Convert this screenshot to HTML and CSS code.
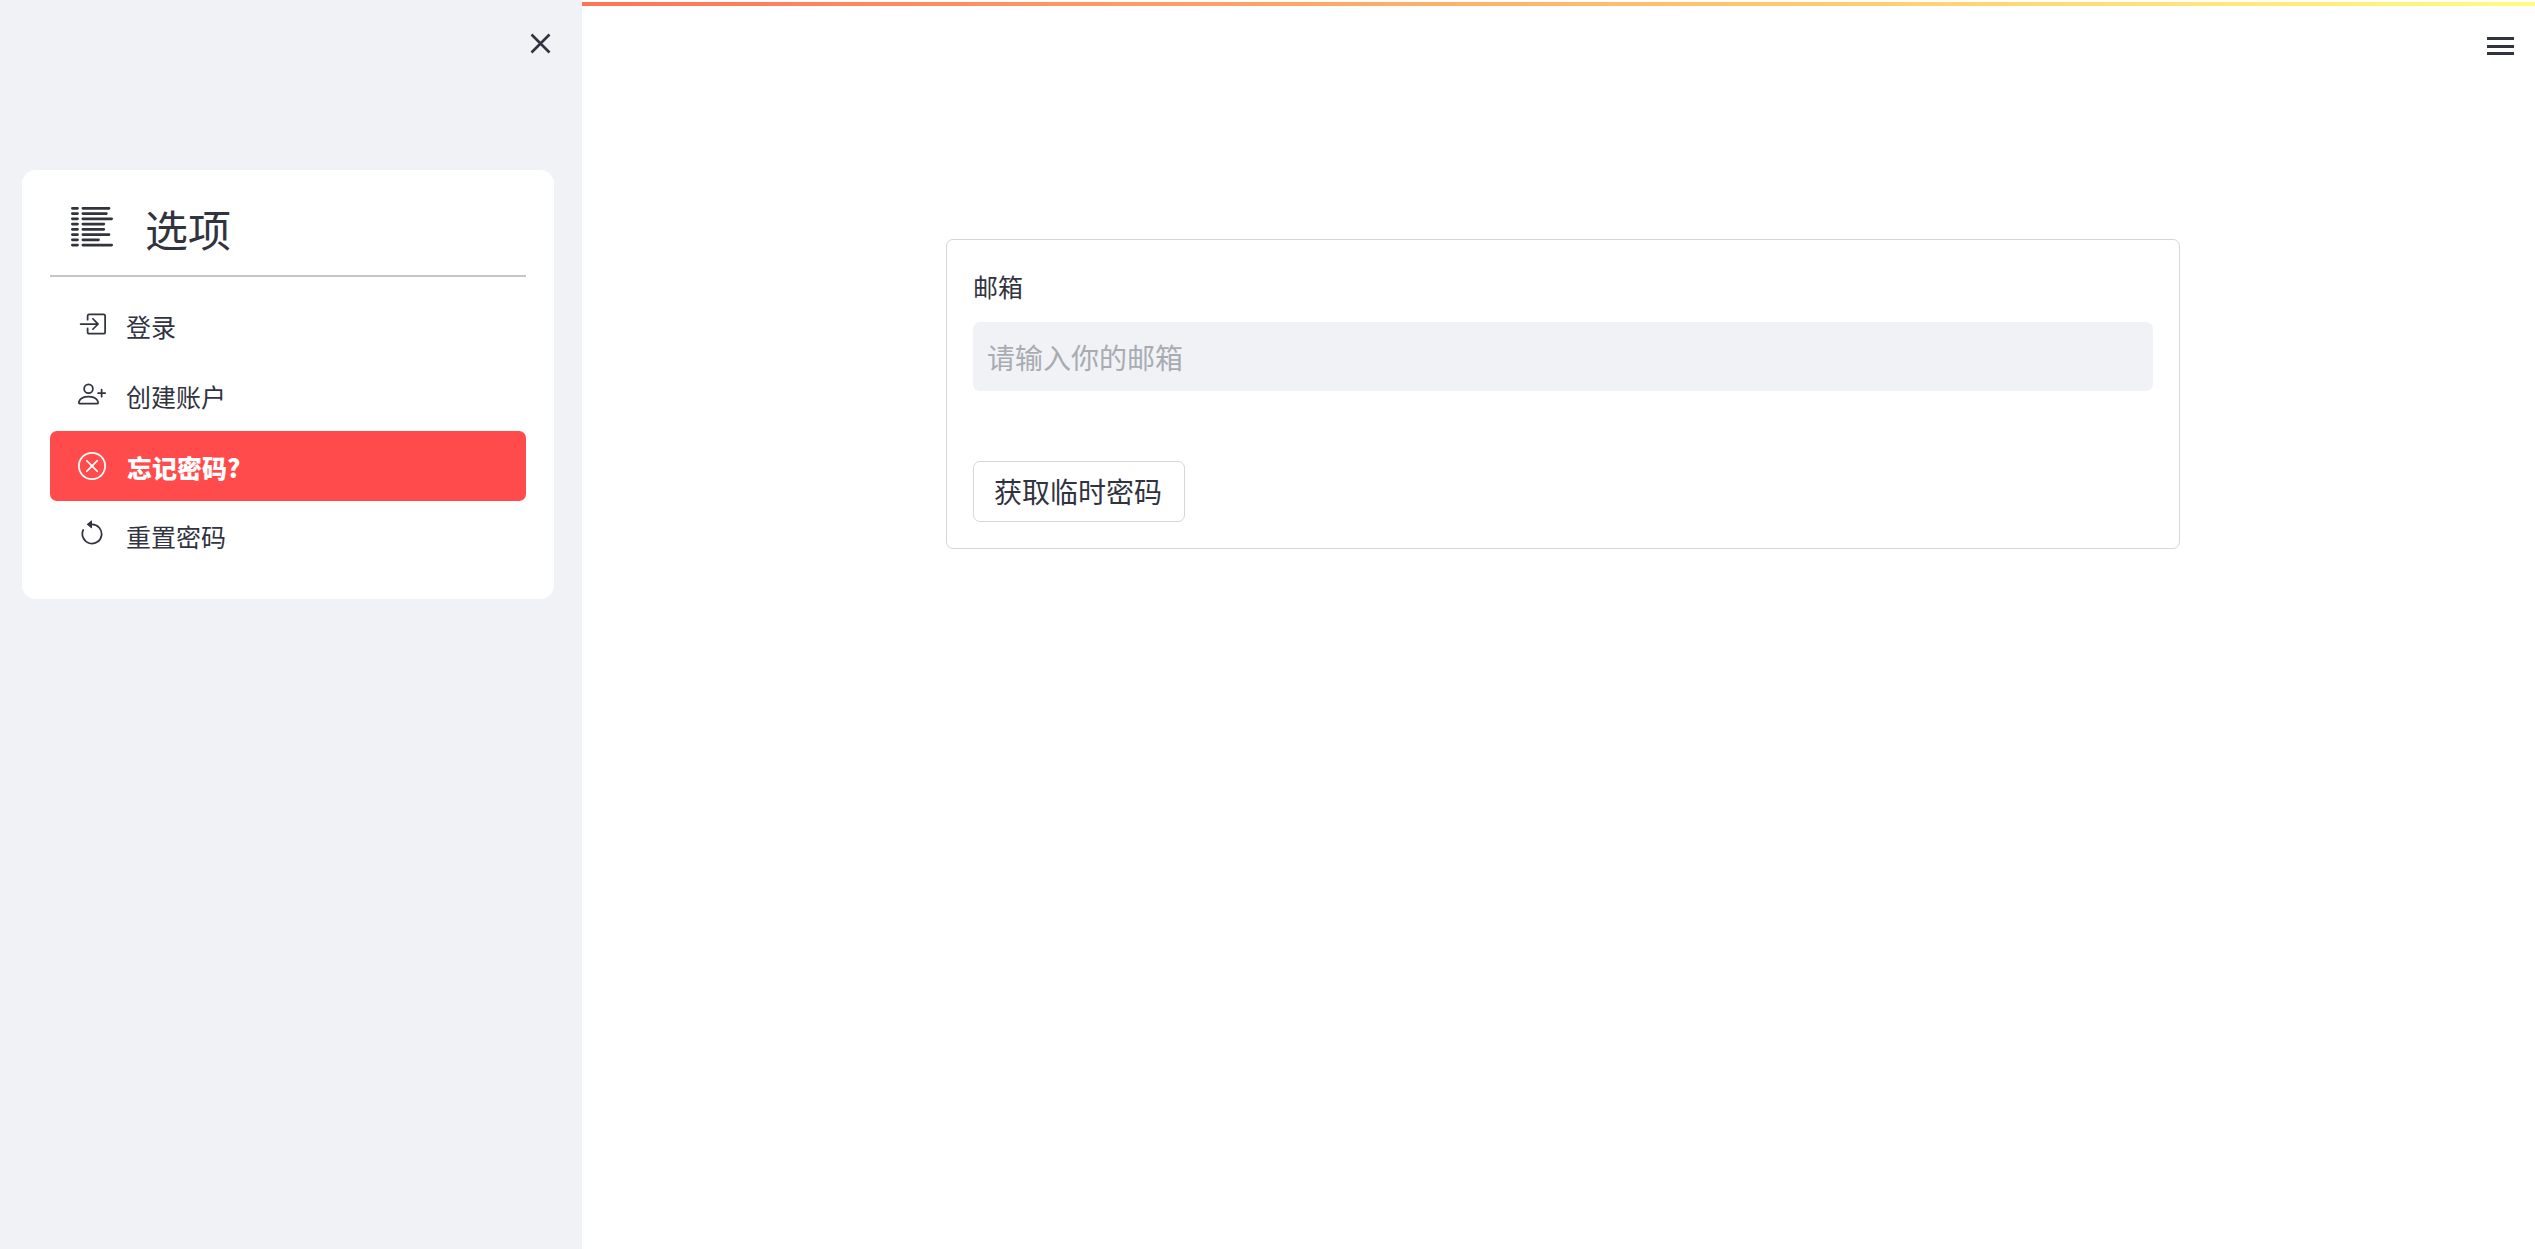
FILE: index.html
```html
<!DOCTYPE html>
<html lang="zh-CN">
<head>
<meta charset="utf-8">
<title>忘记密码</title>
<link rel="stylesheet" href="styles.css">
</head>
<body>
<div class="app">
  <aside class="sidebar">
    <div class="sidebar-head">
      <button class="icon-btn" aria-label="关闭">
        <svg class="close-icon" viewBox="0 0 21 21"><path d="M1.5 1.5l18 18M19.5 1.5l-18 18"/></svg>
      </button>
    </div>
    <nav class="menu">
      <div class="menu-title">
        <svg class="title-icon" viewBox="0 0 16 16"><path d="M0 .5A.5.5 0 0 1 .5 0h2a.5.5 0 0 1 0 1h-2A.5.5 0 0 1 0 .5Zm4 0a.5.5 0 0 1 .5-.5h10a.5.5 0 0 1 0 1h-10A.5.5 0 0 1 4 .5Zm-4 2A.5.5 0 0 1 .5 2h2a.5.5 0 0 1 0 1h-2a.5.5 0 0 1-.5-.5Zm4 0a.5.5 0 0 1 .5-.5h9a.5.5 0 0 1 0 1h-9a.5.5 0 0 1-.5-.5Zm-4 2A.5.5 0 0 1 .5 4h2a.5.5 0 0 1 0 1h-2a.5.5 0 0 1-.5-.5Zm4 0a.5.5 0 0 1 .5-.5h11a.5.5 0 0 1 0 1h-11a.5.5 0 0 1-.5-.5Zm-4 2A.5.5 0 0 1 .5 6h2a.5.5 0 0 1 0 1h-2a.5.5 0 0 1-.5-.5Zm4 0a.5.5 0 0 1 .5-.5h8a.5.5 0 0 1 0 1h-8a.5.5 0 0 1-.5-.5Zm-4 2A.5.5 0 0 1 .5 8h2a.5.5 0 0 1 0 1h-2a.5.5 0 0 1-.5-.5Zm4 0a.5.5 0 0 1 .5-.5h8a.5.5 0 0 1 0 1h-8a.5.5 0 0 1-.5-.5Zm-4 2a.5.5 0 0 1 .5-.5h2a.5.5 0 0 1 0 1h-2a.5.5 0 0 1-.5-.5Zm4 0a.5.5 0 0 1 .5-.5h10a.5.5 0 0 1 0 1h-10a.5.5 0 0 1-.5-.5Zm-4 2a.5.5 0 0 1 .5-.5h2a.5.5 0 0 1 0 1h-2a.5.5 0 0 1-.5-.5Zm4 0a.5.5 0 0 1 .5-.5h6a.5.5 0 0 1 0 1h-6a.5.5 0 0 1-.5-.5Zm-4 2a.5.5 0 0 1 .5-.5h2a.5.5 0 0 1 0 1h-2a.5.5 0 0 1-.5-.5Zm4 0a.5.5 0 0 1 .5-.5h11a.5.5 0 0 1 0 1h-11a.5.5 0 0 1-.5-.5Z"/></svg>
        <span class="title-text">选项</span>
      </div>
      <hr class="menu-rule">
      <ul class="menu-list">
        <li class="menu-item">
          <svg class="item-icon" viewBox="0 0 16 16"><path d="M6 3.5a.5.5 0 0 1 .5-.5h8a.5.5 0 0 1 .5.5v9a.5.5 0 0 1-.5.5h-8a.5.5 0 0 1-.5-.5v-2a.5.5 0 0 0-1 0v2A1.5 1.5 0 0 0 6.5 14h8a1.5 1.5 0 0 0 1.5-1.5v-9A1.5 1.5 0 0 0 14.5 2h-8A1.5 1.5 0 0 0 5 3.5v2a.5.5 0 0 0 1 0v-2z"/><path d="M11.854 8.354a.5.5 0 0 0 0-.708l-3-3a.5.5 0 1 0-.708.708L10.293 7.5H1.5a.5.5 0 0 0 0 1h8.793l-2.147 2.146a.5.5 0 0 0 .708.708l3-3z"/></svg>
          <span>登录</span>
        </li>
        <li class="menu-item">
          <svg class="item-icon" viewBox="0 0 16 16"><path d="M6 8a3 3 0 1 0 0-6 3 3 0 0 0 0 6zm2-3a2 2 0 1 1-4 0 2 2 0 0 1 4 0zm4 8c0 1-1 1-1 1H1s-1 0-1-1 1-4 6-4 6 3 6 4zm-1-.004c-.001-.246-.154-.986-.832-1.664C9.516 10.68 8.289 10 6 10c-2.29 0-3.516.68-4.168 1.332-.678.678-.83 1.418-.832 1.664h10z"/><path d="M13.5 5a.5.5 0 0 1 .5.5V7h1.5a.5.5 0 0 1 0 1H14v1.5a.5.5 0 0 1-1 0V8h-1.5a.5.5 0 0 1 0-1H13V5.5a.5.5 0 0 1 .5-.5z"/></svg>
          <span>创建账户</span>
        </li>
        <li class="menu-item is-active">
          <svg class="item-icon" viewBox="0 0 16 16"><path d="M8 15A7 7 0 1 1 8 1a7 7 0 0 1 0 14zm0 1A8 8 0 1 0 8 0a8 8 0 0 0 0 16z"/><path d="M4.646 4.646a.5.5 0 0 1 .708 0L8 7.293l2.646-2.647a.5.5 0 0 1 .708.708L8.707 8l2.647 2.646a.5.5 0 0 1-.708.708L8 8.707l-2.646 2.647a.5.5 0 0 1-.708-.708L7.293 8 4.646 5.354a.5.5 0 0 1 0-.708z"/></svg>
          <span class="active-label">忘记密码?</span>
        </li>
        <li class="menu-item">
          <svg class="item-icon" viewBox="0 0 16 16"><path fill-rule="evenodd" d="M8 3a5 5 0 1 1-4.546 2.914.5.5 0 0 0-.908-.417A6 6 0 1 0 8 2v1z"/><path d="M8 4.466V.534a.25.25 0 0 0-.41-.192L5.23 2.308a.25.25 0 0 0 0 .384l2.36 1.966A.25.25 0 0 0 8 4.466z"/></svg>
          <span>重置密码</span>
        </li>
      </ul>
    </nav>
  </aside>
  <main class="main">
    <div class="deco-bar"></div>
    <header class="main-head">
      <button class="icon-btn" aria-label="菜单">
        <span class="burger"><i></i><i></i><i></i></span>
      </button>
    </header>
    <section class="form-card">
      <label class="field-label" for="email">邮箱</label>
      <input class="field-input" id="email" type="text" placeholder="请输入你的邮箱">
      <button class="submit-btn">获取临时密码</button>
    </section>
  </main>
</div>
</body>
</html>
```

FILE: styles.css
```css
* { box-sizing: border-box; }
html, body { margin: 0; height: 100%; }
body {
  font-family: "Noto Sans CJK SC", "Noto Sans", sans-serif;
  color: #31333f;
  background: #fff;
  overflow: hidden;
}
.app { display: flex; height: 100vh; }

.sidebar {
  width: 582px;
  flex: none;
  background: #f0f2f6;
  padding: 33px 28px 0 22px;
}
.sidebar-head { display: flex; justify-content: flex-end; height: 137px; }
.icon-btn { border: 0; background: none; padding: 0; color: inherit; display: block; height: 20px; }
.close-icon { display: block; width: 21px; height: 21px; fill: none; stroke: #31333f; stroke-width: 2.6; margin-right: 3px; }

.menu {
  background: #fff;
  border-radius: 14px;
  padding: 37px 28px 28px;
  width: 532px;
}
.menu-title { display: flex; align-items: flex-start; height: 68px; padding-left: 21px; gap: 32px; }
.title-icon { display: block; width: 42px; height: 42px; fill: #31333f; flex: none; }
.title-text { font-size: 43px; line-height: 42px; }
.menu-rule { margin: 0 0 14px; border: 0; height: 2px; background: #c6c6ca; }
.menu-list { list-style: none; margin: 0; padding: 0; }
.menu-item {
  display: flex;
  align-items: center;
  height: 70px;
  padding-left: 28px;
  gap: 20px;
  font-size: 25px;
  border-radius: 7px;
}
.item-icon { display: block; width: 28px; height: 28px; fill: #31333f; flex: none; position: relative; top: -2px; }
.is-active { background: #ff4b4b; color: #fff; font-weight: 900; }
.is-active .item-icon { fill: #fff; top: 0; }
.active-label { position: relative; top: 1px; left: 1px; }

.main { flex: 1; position: relative; min-width: 0; }
.deco-bar {
  position: absolute;
  left: 0; right: 0; top: 2px;
  height: 4px;
  background: linear-gradient(90deg, #ff4b4b, #fffd80);
  background-size: 2535px 100%;
  background-position: -582px 0;
}
.main-head { display: flex; justify-content: flex-end; padding: 36px 21px 0 0; height: 239px; }
.burger { display: flex; flex-direction: column; gap: 4.5px; width: 27px; }
.burger i { display: block; height: 3px; background: #31333f; }

.form-card {
  width: 1234px;
  height: 310px;
  margin-left: 364px;
  border: 1px solid #d6d6d9;
  border-radius: 7px;
  padding: 28px 26px 0;
  display: flex;
  flex-direction: column;
  align-items: flex-start;
}
.field-label { font-size: 25px; line-height: 36px; height: 54px; }
.field-input {
  width: 100%;
  height: 69px;
  border: 0;
  border-radius: 7px;
  background: #f0f2f6;
  padding: 0 14px;
  font: inherit;
  font-size: 28px;
  color: #31333f;
  outline: none;
}
.field-input::placeholder { color: #a9abb2; opacity: 1; }
.submit-btn {
  margin-top: 70px;
  height: 61px;
  width: 212px;
  padding: 0 2px 2px 0;
  background: #fff;
  border: 1px solid #d6d6d9;
  border-radius: 7px;
  font: inherit;
  font-size: 28px;
  color: #31333f;
}
```
